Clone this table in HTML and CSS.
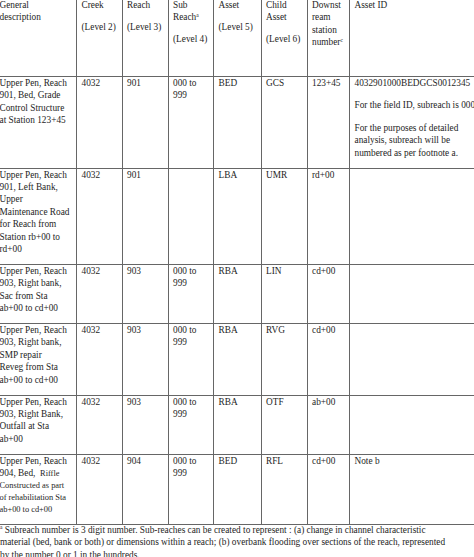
FILE: index.html
```html
<!DOCTYPE html>
<html lang="en">
<head>
<meta charset="utf-8">
<title>Asset table</title>
<link rel="stylesheet" href="styles.css">
</head>
<body>
<div class="page">
  <table class="grid">
    <colgroup>
      <col class="c1"><col class="c2"><col class="c3"><col class="c4"><col class="c5"><col class="c6"><col class="c7"><col class="c8">
    </colgroup>
    <thead>
      <tr>
        <th>General<br>description</th>
        <th><p>Creek</p><p>(Level 2)</p></th>
        <th><p>Reach</p><p>(Level 3)</p></th>
        <th><p>Sub<br>Reach<sup class="sup">a</sup></p><p>(Level 4)</p></th>
        <th><p>Asset</p><p>(Level 5)</p></th>
        <th><p>Child<br>Asset</p><p>(Level 6)</p></th>
        <th>Downst<br>ream<br>station<br>number<sup class="sup">c</sup></th>
        <th>Asset ID</th>
      </tr>
    </thead>
    <tbody>
      <tr>
        <td>Upper Pen, Reach<br>901, Bed, Grade<br>Control Structure<br>at Station 123+45</td>
        <td>4032</td>
        <td>901</td>
        <td>000 to<br>999</td>
        <td>BED</td>
        <td>GCS</td>
        <td>123+45</td>
        <td class="idcell"><p>4032901000BEDGCS0012345</p><p>For the field ID, subreach is 000</p><p>For the purposes of detailed<br>analysis, subreach will be<br>numbered as per footnote a.</p></td>
      </tr>
      <tr>
        <td>Upper Pen, Reach<br>901, Left Bank,<br>Upper<br>Maintenance Road<br>for Reach from<br>Station rb+00 to<br>rd+00</td>
        <td>4032</td>
        <td>901</td>
        <td></td>
        <td>LBA</td>
        <td>UMR</td>
        <td>rd+00</td>
        <td></td>
      </tr>
      <tr>
        <td>Upper Pen, Reach<br>903, Right bank,<br>Sac from Sta<br>ab+00 to cd+00</td>
        <td>4032</td>
        <td>903</td>
        <td>000 to<br>999</td>
        <td>RBA</td>
        <td>LIN</td>
        <td>cd+00</td>
        <td></td>
      </tr>
      <tr>
        <td>Upper Pen, Reach<br>903, Right bank,<br>SMP repair<br>Reveg from Sta<br>ab+00 to cd+00</td>
        <td>4032</td>
        <td>903</td>
        <td>000 to<br>999</td>
        <td>RBA</td>
        <td>RVG</td>
        <td>cd+00</td>
        <td></td>
      </tr>
      <tr>
        <td>Upper Pen, Reach<br>903, Right Bank,<br>Outfall at Sta<br>ab+00</td>
        <td>4032</td>
        <td>903</td>
        <td>000 to<br>999</td>
        <td>RBA</td>
        <td>OTF</td>
        <td>ab+00</td>
        <td></td>
      </tr>
      <tr>
        <td>Upper Pen, Reach<br>904, Bed,&nbsp; <span class="sm">Riffle</span><span class="smblock">Constructed as part<br>of rehabilitation Sta<br>ab+00 to cd+00</span></td>
        <td>4032</td>
        <td>904</td>
        <td>000 to<br>999</td>
        <td>BED</td>
        <td>RFL</td>
        <td>cd+00</td>
        <td>Note b</td>
      </tr>
    </tbody>
  </table>
  <p class="note"><sup class="nsup">a</sup> Subreach number is 3 digit number. Sub-reaches can be created to represent : (a) change in channel characteristic<br>material (bed, bank or both) or dimensions within a reach; (b) overbank flooding over sections of the reach, represented<br>by the number 0 or 1 in the hundreds.</p>
</div>
</body>
</html>
```
FILE: styles.css
```css
* { box-sizing: border-box; }

html, body {
  margin: 0;
  padding: 0;
  background: #ffffff;
  overflow: hidden;
}

.page {
  width: 474px;
  height: 557px;
  overflow: hidden;
  font-family: "Liberation Serif", "Times New Roman", serif;
  color: #1e1e1e;
}

.grid {
  border-collapse: collapse;
  table-layout: fixed;
  width: 495px;
  margin: -2px 0 0 -6px;
  font-size: 9.3px;
  line-height: 12.4px;
}

.c1 { width: 82px; }
.c2 { width: 45.5px; }
.c3 { width: 46px; }
.c4 { width: 45.5px; }
.c5 { width: 47.5px; }
.c6 { width: 46px; }
.c7 { width: 42.5px; }
.c8 { width: 140px; }

.grid th,
.grid td {
  border: 1px solid #666666;
  padding: 0 4.5px 8.5px;
  vertical-align: top;
  text-align: left;
  font-weight: normal;
  white-space: nowrap;
}

.grid thead tr { height: 78px; }

.grid p { margin: 0; }
.grid p + p { margin-top: 9.5px; }
.grid .idcell p + p { margin-top: 10px; }

.sup {
  font-size: 5.5px;
  line-height: 0;
  vertical-align: 3.5px;
}

.sm { font-size: 8.4px; }

.smblock {
  display: block;
  font-size: 8.4px;
  line-height: 11.7px;
}

.note {
  margin: -1.5px 0 0;
  font-size: 9.3px;
  line-height: 12.8px;
  white-space: nowrap;
}

.nsup {
  font-size: 5.5px;
  line-height: 0;
  vertical-align: 4px;
}
```
